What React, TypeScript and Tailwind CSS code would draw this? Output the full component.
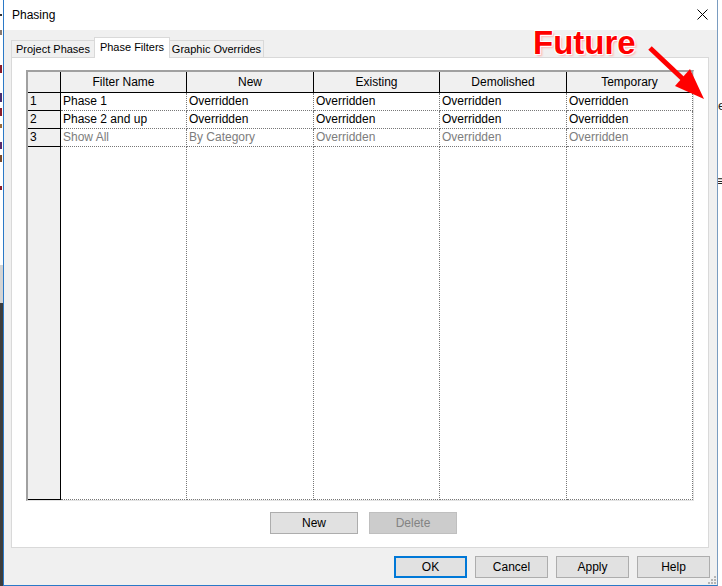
import React from "react";

const cols = [
  { name: "Filter Name", w: "w-[126px]" },
  { name: "New", w: "w-[127px]" },
  { name: "Existing", w: "w-[126px]" },
  { name: "Demolished", w: "w-[127px]" },
  { name: "Temporary", w: "w-[126px]" },
];

const rows = [
  { n: "1", cells: ["Phase 1", "Overridden", "Overridden", "Overridden", "Overridden"], dim: false },
  { n: "2", cells: ["Phase 2 and up", "Overridden", "Overridden", "Overridden", "Overridden"], dim: false },
  { n: "3", cells: ["Show All", "By Category", "Overridden", "Overridden", "Overridden"], dim: true },
];

function Btn({ label, disabled, primary, w }: { label: string; disabled?: boolean; primary?: boolean; w: string }) {
  const base = "h-[22px] flex items-center justify-center text-[12px] box-border ";
  const cls = disabled
    ? "bg-[#cccccc] border border-[#bfbfbf] text-[#838383]"
    : primary
    ? "bg-[#e1e1e1] border-2 border-[#0078d7] text-black"
    : "bg-[#e1e1e1] border border-[#adadad] text-black";
  return <div className={base + cls + " " + w}>{label}</div>;
}

export default function App() {
  return (
    <div className="relative w-[722px] h-[586px] overflow-hidden bg-white flex font-['Liberation_Sans',Arial,sans-serif] text-[12px] text-black">
      {/* left background strip */}
      <div className="w-[3px] h-full flex flex-col shrink-0">
        <div className="h-[265px] bg-white flex flex-col items-start">
          <div className="mt-[14px] w-[2px] h-[2px] bg-[#333]" />
          <div className="mt-[14px] w-[2px] h-[5px] bg-[#8a7a70]" />
          <div className="mt-[30px] w-[2px] h-[8px] bg-[#8b1c2a]" />
          <div className="mt-[20px] w-[2px] h-[9px] bg-[#4a2e6e]" />
          <div className="mt-[6px] w-[2px] h-[8px] bg-[#8b1c2a]" />
          <div className="mt-[8px] w-[2px] h-[4px] bg-[#9a6a3a]" />
          <div className="mt-[14px] w-[2px] h-[7px] bg-[#5a2a6a]" />
          <div className="mt-[6px] w-[2px] h-[7px] bg-[#7a4a2a]" />
          <div className="mt-[24px] w-[2px] h-[4px] bg-[#8b1c2a]" />
        </div>
        <div className="h-[38px] bg-[#d4d4d4]" />
        <div className="flex-1 bg-[#3c3c3c]" />
      </div>

      {/* dialog */}
      <div className="relative w-[715px] h-full shrink-0 border-l border-r border-b border-l-[#2b79c7] border-b-[#2b79c7] border-r-[#7a9cc0] flex flex-col bg-[#f0f0f0]">
        {/* title bar */}
        <div className="h-[30px] bg-white flex items-center justify-between pl-[8px] pr-[9px] shrink-0">
          <span className="text-[12px] leading-none">Phasing</span>
          <svg width="11" height="11" viewBox="0 0 11 11" className="mt-[-1px]">
            <path d="M0.5 0.5 L10.5 10.5 M10.5 0.5 L0.5 10.5" stroke="#000" strokeWidth="1" />
          </svg>
        </div>

        {/* body */}
        <div className="flex-1 flex flex-col pl-[7px] pr-[8px]">
          {/* tabs */}
          <div className="h-[27px] flex items-end shrink-0">
            <div className="w-[83px] h-[17px] border-l border-t border-[#d9d9d9] bg-[#f0f0f0] flex items-center justify-center text-[11px] leading-none">
              Project Phases
            </div>
            <div className="relative z-10 w-[76px] h-[21px] -mb-px border-l border-t border-r border-[#d9d9d9] bg-white flex items-start pt-[4px] justify-center text-[11px] leading-none">
              Phase Filters
            </div>
            <div className="w-[94px] h-[17px] border-t border-r border-[#d9d9d9] bg-[#f0f0f0] flex items-center justify-center text-[11px] leading-none">
              Graphic Overrides
            </div>
          </div>

          {/* panel */}
          <div className="h-[491px] bg-white border border-[#d9d9d9] flex flex-col pt-[12px] pl-[14px] shrink-0">
            {/* grid */}
            <div className="w-[668px] h-[431px] flex flex-col border-t-2 border-l-2 border-[#a0a0a0] border-r border-b border-r-[#e3e3e3] border-b-[#e3e3e3]">
              {/* header */}
              <div className="h-[21px] flex bg-[#f0f0f0] shrink-0">
                <div className="w-[33px] h-full border-r border-b border-black" />
                {cols.map((c, i) => (
                  <div
                    key={c.name}
                    className={
                      c.w +
                      " h-full border-b border-black flex items-center justify-center leading-none " +
                      (i === cols.length - 1 ? "border-r border-r-[#a0a0a0]" : "border-r")
                    }
                  >
                    {c.name}
                  </div>
                ))}
              </div>
              {/* rows */}
              {rows.map((r) => (
                <div key={r.n} className="h-[18px] flex shrink-0">
                  <div className="w-[33px] h-full bg-[#f0f0f0] border-r border-b border-black flex items-center pl-[2px] pb-[1px] leading-none">
                    {r.n}
                  </div>
                  {r.cells.map((t, i) => (
                    <div
                      key={i}
                      className={
                        cols[i].w +
                        " h-full bg-white border-r border-b border-dotted border-[#777] flex items-center pl-[2px] pb-[1px] leading-none whitespace-nowrap " +
                        (r.dim ? "text-[#7d7d7d]" : "text-black")
                      }
                    >
                      {t}
                    </div>
                  ))}
                </div>
              ))}
              {/* filler */}
              <div className="flex-1 flex">
                <div className="w-[33px] h-full bg-[#f0f0f0] border-r border-b border-black" />
                {cols.map((c) => (
                  <div key={c.name} className={c.w + " h-full bg-white border-r border-b border-dotted border-[#777]"} />
                ))}
              </div>
            </div>

            {/* new / delete */}
            <div className="mt-[11px] flex gap-[11px] pl-[244px]">
              <Btn label="New" w="w-[88px]" />
              <Btn label="Delete" w="w-[88px]" disabled />
            </div>
          </div>

          {/* bottom buttons */}
          <div className="mt-[8px] flex justify-end gap-[8px] mr-[-1px]">
            <Btn label="OK" w="w-[73px]" primary />
            <Btn label="Cancel" w="w-[73px]" />
            <Btn label="Apply" w="w-[73px]" />
            <Btn label="Help" w="w-[73px]" />
          </div>
        </div>

        {/* resize grip */}
        <svg className="absolute right-[1px] bottom-[1px]" width="8" height="8" viewBox="0 0 8 8">
          <rect x="6" y="0" width="2" height="2" fill="#b5b5b5" />
          <rect x="3" y="3" width="2" height="2" fill="#b5b5b5" />
          <rect x="6" y="3" width="2" height="2" fill="#b5b5b5" />
          <rect x="0" y="6" width="2" height="2" fill="#b5b5b5" />
          <rect x="3" y="6" width="2" height="2" fill="#b5b5b5" />
          <rect x="6" y="6" width="2" height="2" fill="#b5b5b5" />
        </svg>
      </div>

      {/* right background strip */}
      <div className="flex-1 bg-white overflow-hidden flex flex-col">
        <span className="mt-[99px] text-[13px] leading-none text-[#222]">e</span>
        <span className="mt-[62px] text-[14px] leading-none text-[#222] ml-[-1px]">≡</span>
      </div>

      {/* annotation */}
      <div className="absolute left-[533px] top-[26px] text-[33px] leading-none font-bold text-[#ff0000] [text-shadow:1px_1px_0_#fff,-1px_-1px_0_#fff,1px_-1px_0_#fff,-1px_1px_0_#fff,2px_2px_2px_#ffb0b0]">
        Future
      </div>
      <svg className="absolute left-0 top-0" width="722" height="586" viewBox="0 0 722 586" style={{ pointerEvents: "none" }}>
        <line x1="650" y1="48" x2="685" y2="81" stroke="#ff0000" strokeWidth="5" />
        <polygon points="690,69 675,86 704,99" fill="#ff0000" />
      </svg>
    </div>
  );
}
